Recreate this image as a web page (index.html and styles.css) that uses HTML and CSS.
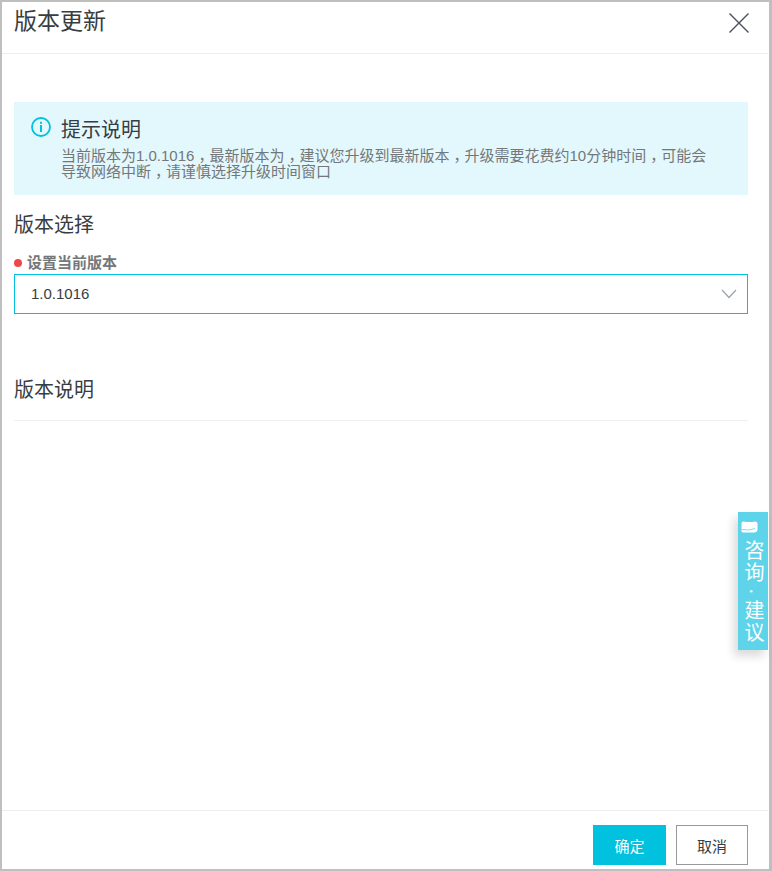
FILE: index.html
```html
<!DOCTYPE html>
<html lang="zh-CN">
<head>
<meta charset="utf-8">
<title>版本更新</title>
<link rel="stylesheet" href="styles.css">
</head>
<body>
<div class="dialog">
  <header class="dialog-header">
    <h1 class="dialog-title">版本更新</h1>
    <button class="close" aria-label="关闭">
      <svg width="20" height="20" viewBox="0 0 20 20"><path d="M0.500 0.500L19.500 19.500M19.500 0.500L0.500 19.500" fill="none" stroke="#4a5058" stroke-width="1.4"/></svg>
    </button>
  </header>
  <main class="dialog-body">
    <section class="notice">
      <svg class="notice-icon" width="20" height="20" viewBox="0 0 20 20"><circle cx="10" cy="10" r="9" fill="none" stroke="#00c1de" stroke-width="1.8"/><rect x="9" y="4.800" width="2" height="2" fill="#00c1de"/><rect x="9" y="8" width="2" height="7" fill="#00c1de"/></svg>
      <div class="notice-content">
        <h2 class="notice-title">提示说明</h2>
        <p class="notice-text">当前版本为1.0.1016<span class="comma">，</span>最新版本为<span class="comma">，</span>建议您升级到最新版本<span class="comma">，</span>升级需要花费约10分钟时间<span class="comma">，</span>可能会导致网络中断<span class="comma">，</span>请谨慎选择升级时间窗口</p>
      </div>
    </section>
    <h2 class="section-title">版本选择</h2>
    <label class="field-label"><span class="required"></span>设置当前版本</label>
    <div class="select">
      <span>1.0.1016</span>
      <svg width="16" height="10" viewBox="0 0 16 10"><path d="M1 1L8 8.500L15 1" fill="none" stroke="#9aa3a8" stroke-width="1.2"/></svg>
    </div>
    <h2 class="section-title notes-title">版本说明</h2>
    <div class="notes"></div>
  </main>
  <footer class="dialog-footer">
    <button class="btn btn-primary">确定</button>
    <button class="btn btn-default">取消</button>
  </footer>
</div>
<aside class="feedback">
  <svg width="17" height="12" viewBox="0 0 17 12"><path d="M2.500 0.500Q9 1.500 14 0.500Q16.500 0.500 16.500 2.500V8Q16.500 11.500 13 11.500H2Q0.500 11.500 0.500 10V2.500Q0.500 0.500 2.500 0.500Z" fill="#fff"/><path d="M0.500 8.500Q8 10 14 7.500" fill="none" stroke="#5ed4ea" stroke-width="0.8"/></svg>
  <span class="feedback-text">咨询<span class="feedback-dot">·</span>建议</span>
</aside>
</body>
</html>
```
FILE: styles.css
```css
* { box-sizing: border-box; }
html, body { margin: 0; padding: 0; height: 100%; }
body {
  width: 772px;
  height: 871px;
  overflow: hidden;
  position: relative;
  background: #bfbfbf;
  padding: 2px 3px 2px 2px;
  font-family: "Liberation Sans", "Noto Sans CJK SC", sans-serif;
  color: #333;
}
.dialog {
  height: 100%;
  background: #fff;
  display: flex;
  flex-direction: column;
  padding-right: 1px;
}
.dialog-header {
  height: 52px;
  flex: none;
  border-bottom: 1px solid #eeeeee;
  display: flex;
  justify-content: space-between;
  padding: 0 19px 0 12px;
}
.dialog-title {
  margin: 0;
  font-size: 23px;
  font-weight: 400;
  line-height: 38px;
  color: #373d41;
}
.close {
  border: 0;
  background: none;
  padding: 10px 0 0;
  height: 32px;
}
.close svg { display: block; }
.dialog-body {
  flex: 1;
  padding: 48px 20px 0 12px;
}
.notice {
  height: 93px;
  background: #e3f8fd;
  display: flex;
  padding: 15px 16px 0 17px;
  gap: 10px;
}
.notice-icon { flex: none; }
.notice-title {
  margin: 1px 0 0;
  font-size: 20px;
  font-weight: 400;
  line-height: 24px;
  color: #373d41;
}
.notice-text {
  margin: 6px 0 0;
  font-size: 15px;
  line-height: 16px;
  color: #73777a;
  width: 650px;
}
.comma {
  padding-left: 4px;
  margin-right: -4px;
}
.section-title {
  margin: 16px 0 0;
  font-size: 20px;
  font-weight: 400;
  line-height: 28px;
  color: #373d41;
}
.field-label {
  display: flex;
  align-items: center;
  margin-top: 14px;
  height: 20px;
  font-size: 15px;
  font-weight: 700;
  line-height: 20px;
  color: #73777a;
}
.required {
  width: 8px;
  height: 8px;
  border-radius: 50%;
  background: #f04848;
  margin-right: 5px;
}
.select {
  height: 40px;
  margin-top: 1px;
  border: 1px solid #00c1de;
  display: flex;
  align-items: center;
  justify-content: space-between;
  padding: 0 10px 0 16px;
  font-size: 15px;
  line-height: 17px;
  color: #373d41;
}
.select span { margin-top: -2px; }
.notes-title { margin-top: 62px; }
.notes {
  margin-top: 16px;
  border-top: 1px solid #eeeeee;
}
.dialog-footer {
  height: 59px;
  flex: none;
  border-top: 1px solid #eeeeee;
  display: flex;
  justify-content: flex-end;
  gap: 10px;
  padding: 14px 20px 0 0;
}
.btn {
  height: 40px;
  font: 15px "Liberation Sans", "Noto Sans CJK SC", sans-serif;
  padding: 0;
}
.btn-primary {
  width: 73px;
  border: 0;
  background: #00c1de;
  color: #fff;
}
.btn-default {
  width: 72px;
  border: 1px solid #999;
  background: #fff;
  color: #373d41;
}
.feedback {
  position: absolute;
  left: 738px;
  top: 512px;
  width: 30px;
  height: 138px;
  background: #5ed4ea;
  box-shadow: -4px 6px 10px rgba(0, 0, 0, 0.15);
  display: flex;
  flex-direction: column;
  align-items: center;
  padding-top: 9px;
  color: #fff;
}
.feedback svg { flex: none; margin-left: -8px; }
.feedback-text {
  writing-mode: vertical-rl;
  font-size: 20px;
  line-height: 20px;
  letter-spacing: 2px;
  margin-top: 7px;
}
.feedback-dot { padding-inline: 4px; }
```
